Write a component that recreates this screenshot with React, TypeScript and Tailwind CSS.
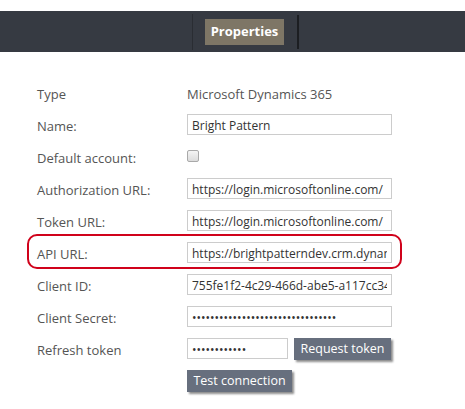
import React from "react";

const font = { fontFamily: '"Open Sans", "Liberation Sans", sans-serif' };

function Field({ value, w = "w-[205px]" }: { value: string; w?: string }) {
  return (
    <input
      readOnly
      value={value}
      className={`${w} h-[21px] border border-[#cccccc] bg-white px-[4px] pt-[1px] text-[12px] text-[#333333] outline-none`}
      style={font}
    />
  );
}

function Label({ children }: { children: React.ReactNode }) {
  return (
    <div className="flex h-[21px] items-center pt-[4px] text-[13px] text-[#555555]">{children}</div>
  );
}

function Btn({ children, w }: { children: React.ReactNode; w: string }) {
  return (
    <button
      className={`${w} h-[22px] bg-[#676f7e] text-[12.5px] leading-none text-white shadow-[2px_2px_2px_rgba(0,0,0,0.45)]`}
      style={font}
    >
      {children}
    </button>
  );
}

export default function App() {
  return (
    <div className="h-[409px] w-[465px] bg-white" style={font}>
      <div className="h-[11px]" />
      <div className="flex h-[41px] items-center bg-[#363a42] pl-[192px]">
        <div className="h-[36px] w-[1px] bg-[#2a2d33]" />
        <div className="ml-[12px] flex h-[26px] w-[79px] items-center justify-center bg-[#7e7666] text-[13px] font-bold text-white">
          Properties
        </div>
        <div className="ml-[13px] h-[34px] w-[2px] bg-[#1c1e22]" />
      </div>
      <div className="grid grid-cols-[150px_1fr] gap-y-[11px] pl-[37px] pt-[30px]">
        <Label>Type</Label>
        <div className="flex h-[21px] items-center pt-[4px] text-[13px] text-[#555555]">
          Microsoft Dynamics 365
        </div>

        <Label>Name:</Label>
        <Field value="Bright Pattern" />

        <Label>Default account:</Label>
        <div className="flex h-[21px] items-start pt-[4px]">
          <div className="h-[12px] w-[12px] rounded-[2px] border border-[#a9a9a9] bg-gradient-to-b from-[#f4f4f4] to-[#dcdcdc]" />
        </div>

        <Label>Authorization URL:</Label>
        <Field value="https://login.microsoftonline.com/" />

        <Label>Token URL:</Label>
        <Field value="https://login.microsoftonline.com/" />

        <div className="relative">
          <div className="pointer-events-none absolute left-[-10px] top-[-8px] h-[35px] w-[375px] rounded-[10px] border-2 border-[#d0021b]" />
          <Label>API URL:</Label>
        </div>
        <Field value="https://brightpatterndev.crm.dynamics.com/" />

        <Label>Client ID:</Label>
        <Field value="755fe1f2-4c29-466d-abe5-a117cc34f1a2" />

        <Label>Client Secret:</Label>
        <Field value={"•".repeat(32)} />

        <Label>Refresh token</Label>
        <div className="flex h-[21px] items-start gap-[6px]">
          <Field value={"•".repeat(12)} w="w-[101px]" />
          <Btn w="w-[97px]">Request token</Btn>
        </div>

        <div />
        <div className="flex">
          <Btn w="w-[105px]">Test connection</Btn>
        </div>
      </div>
    </div>
  );
}
